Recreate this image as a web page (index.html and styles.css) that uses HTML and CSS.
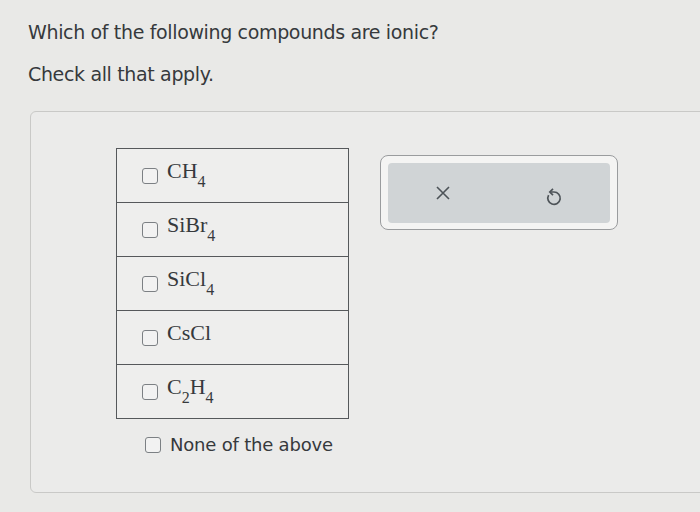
FILE: index.html
```html
<!DOCTYPE html>
<html lang="en">

<head>
    <meta charset="UTF-8">
    <title>Ionic compounds</title>
    <link rel="stylesheet" href="styles.css">
</head>

<body>
    <div class="question">
        <p class="prompt">Which of the following compounds are ionic?</p>
        <p class="hint">Check all that apply.</p>
    </div>

    <div class="answer-panel">
        <div class="choices">
            <table class="compounds">
                <tr><td><label><span class="box"></span><span class="formula">CH<sub>4</sub></span></label></td></tr>
                <tr><td><label><span class="box"></span><span class="formula">SiBr<sub>4</sub></span></label></td></tr>
                <tr><td><label><span class="box"></span><span class="formula">SiCl<sub>4</sub></span></label></td></tr>
                <tr><td><label><span class="box"></span><span class="formula">CsCl</span></label></td></tr>
                <tr><td><label><span class="box"></span><span class="formula">C<sub>2</sub>H<sub>4</sub></span></label></td></tr>
            </table>
            <label class="none-option"><span class="box"></span>None of the above</label>
        </div>

        <div class="tools">
            <div class="tools-inner">
                <button class="tool-btn" type="button" aria-label="Clear">
                    <svg width="16" height="16" viewBox="0 0 16 16">
                        <path d="M2 2 L14 14 M14 2 L2 14" stroke="#4d5358" stroke-width="1.6" fill="none"/>
                    </svg>
                </button>
                <button class="tool-btn undo" type="button" aria-label="Undo">
                    <svg width="20" height="22" viewBox="0 0 20 22">
                        <path d="M4.6 10.2 A6.2 6.2 0 1 0 10 7 L6.5 7" stroke="#4d5358" stroke-width="1.7" fill="none"/>
                        <path d="M9 3.8 L5.8 7 L9 10.2" stroke="#4d5358" stroke-width="1.7" fill="none"/>
                    </svg>
                </button>
            </div>
        </div>
    </div>
</body>

</html>
```

FILE: styles.css
```css
body {
    margin: 0;
    padding: 0;
    background-color: #e9e9e7;
    color: #36393c;
    font-family: "DejaVu Sans", Verdana, sans-serif;
    height: 512px;
    overflow: hidden;
}

.question {
    padding: 19px 0 0 28px;
}

.prompt {
    margin: 0;
    font-size: 19px;
    letter-spacing: -0.35px;
    line-height: 26px;
}

.hint {
    margin: 16px 0 0 0;
    font-size: 19px;
    letter-spacing: -0.35px;
    line-height: 26px;
}

.answer-panel {
    margin: 24px -20px 0 30px;
    height: 380px;
    border: 1px solid #c9c9c7;
    border-radius: 6px;
    background-color: #ebebea;
    display: flex;
    align-items: flex-start;
}

/* lista de compuestos */
.choices {
    padding: 36px 0 0 85px;
}

.compounds {
    border-collapse: collapse;
    width: 233px;
}

.compounds td {
    border: 1.5px solid #55585b;
    height: 53px;
    padding: 0 0 0 26px;
    background-color: #eeeeed;
}

.compounds label {
    display: flex;
    align-items: center;
}

.formula {
    font-family: "Liberation Serif", "Times New Roman", serif;
    font-size: 22px;
    color: #36393c;
    line-height: 24px;
    margin-top: -10px;
}

.formula sub {
    font-size: 16px;
    vertical-align: -9px;
    line-height: 0;
}

.box {
    display: inline-block;
    width: 14px;
    height: 14px;
    border: 1px solid #7c8084;
    border-radius: 3px;
    background-color: #f2f2f2;
    margin-right: 9px;
    flex-shrink: 0;
}

.compounds .box {
    margin-left: -1px;
}

.none-option {
    display: flex;
    align-items: center;
    margin: 15px 0 0 29px;
    font-size: 18px;
    letter-spacing: -0.2px;
    color: #36393c;
}

.none-option .box {
    margin-right: 9px;
}

/* botones */
.tools {
    margin: 43px 0 0 31px;
    width: 222px;
    padding: 7px 7px 6px;
    border: 1.5px solid #9a9c9e;
    border-radius: 8px;
    background-color: #f4f4f3;
}

.tools-inner {
    display: flex;
    justify-content: space-around;
    align-items: center;
    height: 60px;
    background-color: #d0d4d6;
    border-radius: 4px;
}

.tool-btn {
    border: none;
    background: none;
    padding: 0;
    display: flex;
    cursor: pointer;
}

.undo {
    margin-top: 6px;
}
```
